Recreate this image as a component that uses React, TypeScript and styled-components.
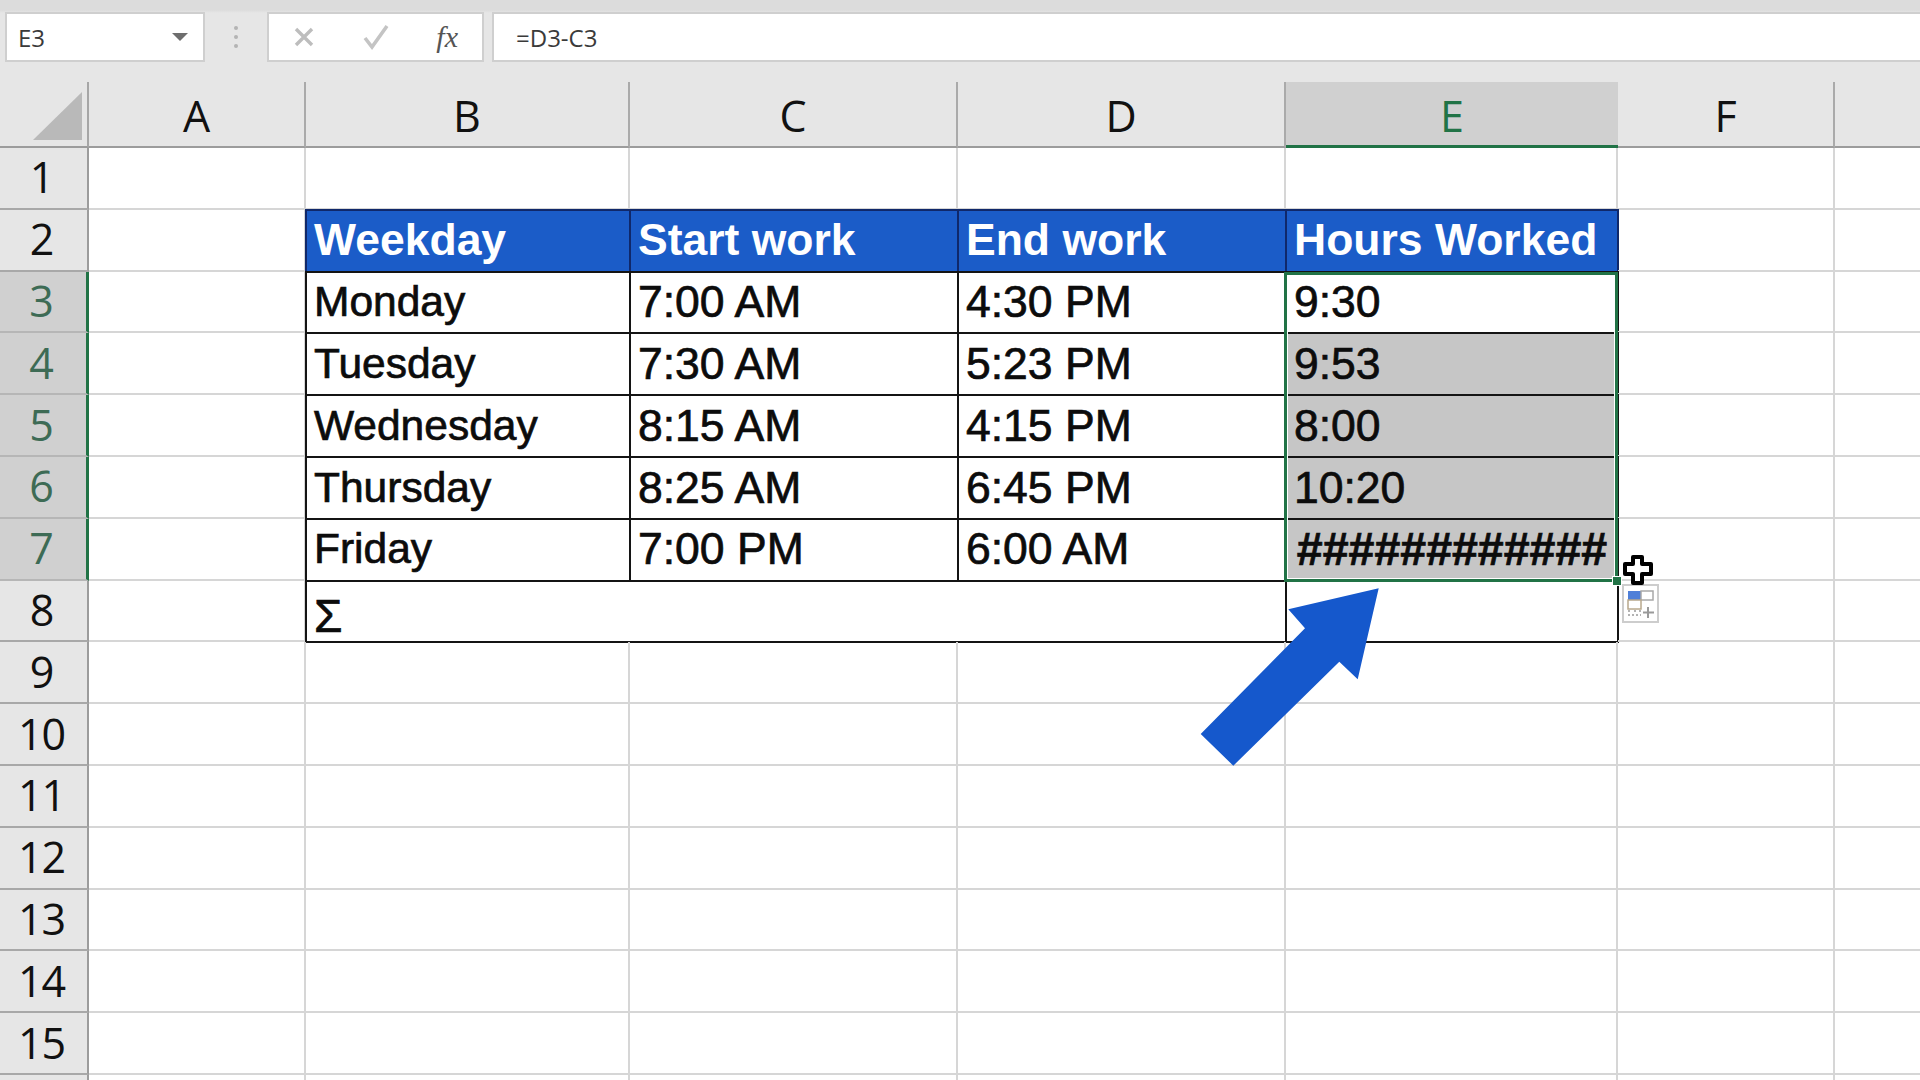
import React from "react";
import styled, { createGlobalStyle } from "styled-components";

const Global = createGlobalStyle`
  html, body { margin: 0; padding: 0; background: #fff; }
  #root { width: 1920px; height: 1080px; overflow: hidden; }
`;

const GREEN = "#217346";
const GRID = "#d6d6d6";
const HEAD = "#e6e6e6";
const SELECTED = "#d0d0d0";

const Page = styled.div`
  width: 1920px;
  height: 1080px;
  overflow: hidden;
  display: flex;
  flex-direction: column;
  background: #fff;
`;

const FormulaBar = styled.div`
  height: 82px;
  flex: none;
  box-sizing: border-box;
  padding: 12px 0 20px 5px;
  display: flex;
  align-items: stretch;
  background: linear-gradient(#dcdcdc 0, #dcdcdc 10px, ${HEAD} 13px);
`;

const Box = styled.div<{ $w?: number }>`
  box-sizing: border-box;
  background: #fff;
  border: 2px solid #cfcfcf;
  display: flex;
  align-items: center;
  ${(p) => (p.$w ? `width: ${p.$w}px; flex: none;` : "flex: 1;")}
`;

const NameBox = styled(Box)`
  padding: 0 15px 0 11px;
  justify-content: space-between;
`;

const BarText = styled.span`
  font-family: "Open Sans", "Noto Sans", sans-serif;
  font-size: 24px;
  color: #3a3a3a;
`;

const Caret = styled.span`
  width: 0;
  height: 0;
  border-left: 8px solid transparent;
  border-right: 8px solid transparent;
  border-top: 8px solid #6e6e6e;
`;

const Dots = styled.div`
  width: 62px;
  flex: none;
  display: flex;
  flex-direction: column;
  align-items: center;
  justify-content: center;
  gap: 5px;
  i {
    width: 4px;
    height: 4px;
    border-radius: 50%;
    background: #b4b4b4;
  }
`;

const FxBox = styled(Box)`
  margin-right: 8px;
  padding: 0 24px 0 24px;
  justify-content: space-between;
`;

const FormulaBox = styled(Box)`
  padding-left: 22px;
  border-right: none;
`;

const Fx = styled.span`
  font-family: "Liberation Serif", serif;
  font-style: italic;
  font-size: 30px;
  line-height: 1;
  color: #555;
`;

const Sheet = styled.div`
  position: relative;
  flex: 1;
`;

const Grid = styled.div`
  display: grid;
  grid-template-columns: 89px 217px 324px 328px 328px 332px 217px 1fr;
  grid-auto-rows: 61.8px;
  grid-template-rows: 66px;
`;

const Corner = styled.div`
  box-sizing: border-box;
  background: ${HEAD};
  border-right: 2px solid #a6a6a6;
  border-bottom: 2px solid #9c9c9c;
  padding: 10px 5px 6px 33px;
  display: flex;
  &::before {
    content: "";
    flex: 1;
    background: #b9b9b9;
    clip-path: polygon(100% 0, 100% 100%, 0 100%);
  }
`;

const ColHead = styled.div<{ $sel?: boolean; $last?: boolean }>`
  box-sizing: border-box;
  display: flex;
  align-items: center;
  justify-content: center;
  padding-top: 3px;
  font-family: "Open Sans", "Noto Sans", sans-serif;
  font-size: 43px;
  line-height: 1;
  background: ${(p) => (p.$sel ? SELECTED : HEAD)};
  color: ${(p) => (p.$sel ? GREEN : "#111")};
  border-right: ${(p) => (p.$sel || p.$last ? "none" : "2px solid #aaaaaa")};
  border-bottom: ${(p) => (p.$sel ? `3px solid ${GREEN}` : "2px solid #9c9c9c")};
`;

const RowHead = styled.div<{ $sel?: boolean }>`
  box-sizing: border-box;
  display: flex;
  align-items: center;
  justify-content: center;
  padding: 0 4px 2px 0;
  font-family: "Open Sans", "Noto Sans", sans-serif;
  font-size: 43px;
  line-height: 1;
  letter-spacing: -1px;
  background: ${(p) => (p.$sel ? SELECTED : HEAD)};
  color: ${(p) => (p.$sel ? "#3d6b55" : "#111")};
  border-right: ${(p) => (p.$sel ? `3px solid ${GREEN}` : "2px solid #9c9c9c")};
  border-bottom: 2px solid ${(p) => (p.$sel ? "#b6b6b6" : "#a8a8a8")};
`;

const Cell = styled.div<{ $last?: boolean }>`
  box-sizing: border-box;
  border-bottom: 2px solid ${GRID};
  border-right: ${(p) => (p.$last ? "none" : `2px solid ${GRID}`)};
`;

const TableCell = styled.div<{ $span?: number; $fill?: boolean; $center?: boolean; $size?: number }>`
  box-sizing: border-box;
  grid-column: span ${(p) => p.$span ?? 1};
  display: flex;
  align-items: center;
  justify-content: ${(p) => (p.$center ? "center" : "flex-start")};
  padding-left: ${(p) => (p.$center ? 0 : 8)}px;
  font-family: "Liberation Sans", Arial, sans-serif;
  font-size: ${(p) => p.$size ?? 42.5}px;
  line-height: 1;
  white-space: nowrap;
  color: #0c0c0c;
  -webkit-text-stroke: 0.7px #0c0c0c;
  background: ${(p) => (p.$fill ? "#c6c6c6" : "#fff")};
  outline: 2px solid #141414;
  outline-offset: -1px;
`;

const HeaderCell = styled(TableCell)`
  background: #1b5cc8;
  color: #fff;
  -webkit-text-stroke: 0;
  font-weight: 700;
  font-size: 44.5px;
  outline-color: #10286a;
`;

const Hashes = styled.span`
  font-weight: 700;
  font-size: 46.500px;
`;

const Sigma = styled.span`
  padding-top: 9px;
  font-size: 46px;
`;

const Selection = styled.div`
  position: absolute;
  left: 1284px;
  top: 190px;
  width: 334px;
  height: 310px;
  box-sizing: border-box;
  border: 3px solid ${GREEN};
  box-shadow: inset 0 0 0 1px #fff;
  pointer-events: none;
`;

const Handle = styled.div`
  position: absolute;
  left: 1612px;
  top: 494px;
  width: 10px;
  height: 10px;
  background: ${GREEN};
  border: 1px solid #fff;
  box-sizing: border-box;
`;

const Overlay = styled.svg<{ $x: number; $y: number }>`
  position: absolute;
  left: ${(p) => p.$x}px;
  top: ${(p) => p.$y}px;
`;

const PasteButton = styled.div`
  position: absolute;
  left: 1622px;
  top: 502px;
  width: 37px;
  height: 39px;
  box-sizing: border-box;
  background: #fff;
  border: 2px solid #cdcdcd;
`;

const TIME = 44.5;
const cols = ["A", "B", "C", "D", "E", "F", ""];
const rows = [
  ["Monday", "7:00 AM", "4:30 PM", "9:30"],
  ["Tuesday", "7:30 AM", "5:23 PM", "9:53"],
  ["Wednesday", "8:15 AM", "4:15 PM", "8:00"],
  ["Thursday", "8:25 AM", "6:45 PM", "10:20"],
  ["Friday", "7:00 PM", "6:00 AM", "############"],
];

const Outer = ({ n }: { n: number }) => (
  <>
    <RowHead $sel={n >= 3 && n <= 7}>{n < 16 ? n : ""}</RowHead>
    <Cell />
  </>
);
const Tail = () => (
  <>
    <Cell />
    <Cell $last />
  </>
);

export default function App() {
  return (
    <Page>
      <Global />
      <FormulaBar>
        <NameBox $w={200}>
          <BarText>E3</BarText>
          <Caret />
        </NameBox>
        <Dots>
          <i />
          <i />
          <i />
        </Dots>
        <FxBox $w={217}>
          <svg width="22" height="22" viewBox="0 0 22 22">
            <path d="M3 3 L19 19 M19 3 L3 19" stroke="#bdbdbd" strokeWidth="3.4" fill="none" />
          </svg>
          <svg width="28" height="26" viewBox="0 0 28 26">
            <path d="M3 14 L10 23 L25 2" stroke="#c4c4c4" strokeWidth="3.6" fill="none" />
          </svg>
          <Fx>fx</Fx>
        </FxBox>
        <FormulaBox>
          <BarText>=D3-C3</BarText>
        </FormulaBox>
      </FormulaBar>
      <Sheet>
        <Grid>
          <Corner />
          {cols.map((c, i) => (
            <ColHead key={i} $sel={c === "E"} $last={c === ""}>
              {c}
            </ColHead>
          ))}

          <Outer n={1} />
          <Cell />
          <Cell />
          <Cell />
          <Cell />
          <Tail />

          <Outer n={2} />
          <HeaderCell>Weekday</HeaderCell>
          <HeaderCell>Start work</HeaderCell>
          <HeaderCell>End work</HeaderCell>
          <HeaderCell>Hours Worked</HeaderCell>
          <Tail />

          {rows.map((r, i) => (
            <React.Fragment key={i}>
              <Outer n={i + 3} />
              <TableCell>{r[0]}</TableCell>
              <TableCell $size={TIME}>{r[1]}</TableCell>
              <TableCell $size={TIME}>{r[2]}</TableCell>
              {i === 4 ? (
                <TableCell $fill $center>
                  <Hashes>{r[3]}</Hashes>
                </TableCell>
              ) : (
                <TableCell $fill={i > 0} $size={TIME}>
                  {r[3]}
                </TableCell>
              )}
              <Tail />
            </React.Fragment>
          ))}

          <Outer n={8} />
          <TableCell $span={3}>
            <Sigma>Σ</Sigma>
          </TableCell>
          <TableCell />
          <Tail />

          {[9, 10, 11, 12, 13, 14, 15, 16].map((n) => (
            <React.Fragment key={n}>
              <Outer n={n} />
              <Cell />
              <Cell />
              <Cell />
              <Cell />
              <Tail />
            </React.Fragment>
          ))}
        </Grid>

        <Selection />
        <Handle />
        <Overlay $x={1190} $y={496} width={200} height={190} viewBox="0 0 200 190">
          <polygon
            points="188.7,10.3 98.3,31.3 115,50.3 10.7,156 43.3,187.7 149.3,83.7 167.7,101.3"
            fill="#1558cc"
          />
        </Overlay>
        <PasteButton>
          <svg width="33" height="35" viewBox="0 0 33 35">
            <rect x="4" y="5" width="13" height="9" fill="#4f7fd8" />
            <rect x="17" y="5" width="12" height="9" fill="#fff" stroke="#a8a8a8" strokeWidth="1.5" />
            <rect x="4" y="14" width="13" height="9" fill="#fff" stroke="#b8a88c" strokeWidth="1.5" />
            <path d="M4 29 H17 M4 25 H6 M10 25 H12 M15 25 H17" stroke="#9a9a9a" strokeWidth="1.5" strokeDasharray="2 2" />
            <path d="M24 21 V32 M19 26.500 H30" stroke="#9a9a9a" strokeWidth="2" />
          </svg>
        </PasteButton>
        <Overlay $x={1622} $y={473} width={32} height={30} viewBox="0 0 32 30">
          <path
            d="M11 2 H20 V9 H29 V19 H20 V28 H11 V19 H3 V9 H11 Z"
            fill="#fff"
            stroke="#000"
            strokeWidth="4"
            strokeLinejoin="round"
          />
        </Overlay>
      </Sheet>
    </Page>
  );
}
